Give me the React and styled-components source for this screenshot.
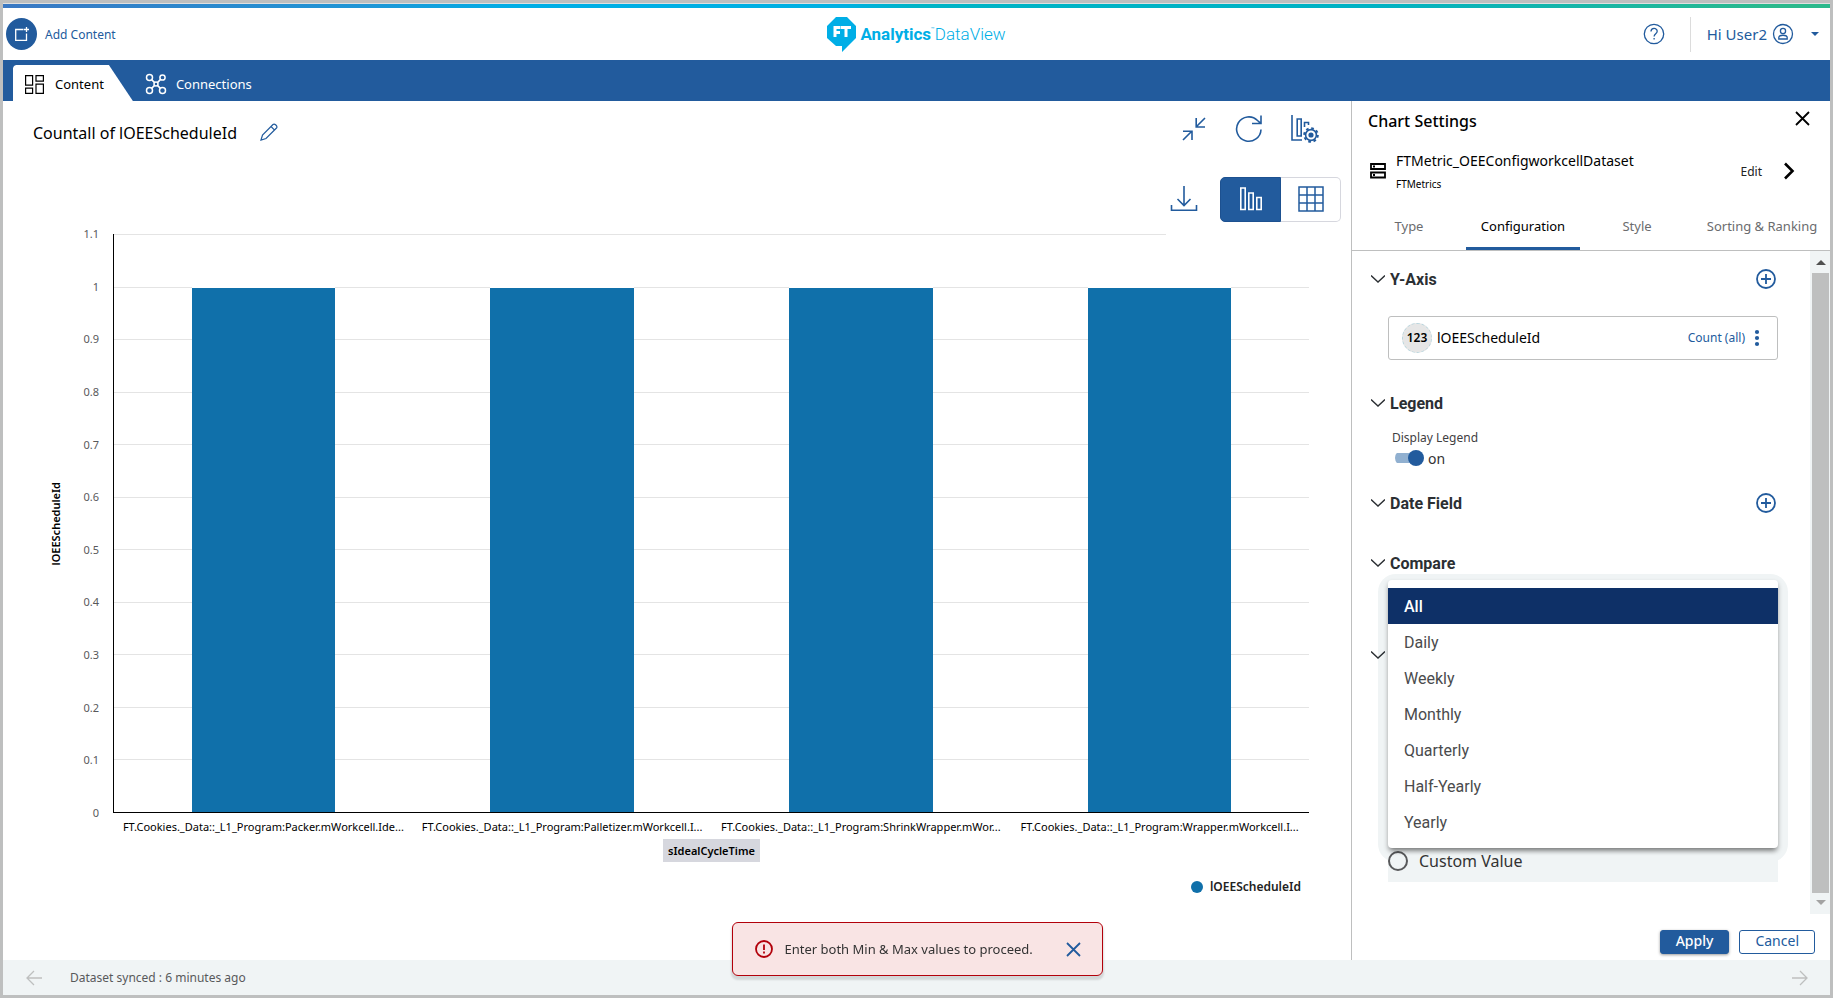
import React, { useState } from 'react';
import styled, { createGlobalStyle } from 'styled-components';

const GlobalStyle = createGlobalStyle`
  * {
    box-sizing: border-box;
  }

  body {
    margin: 0;
    font-family: "Noto Sans", sans-serif;
    font-size: 14px;
    color: #000000;
    background-color: #ffffff;
  }

  button {
    font-family: inherit;
    background: none;
    border: none;
    padding: 0;
    cursor: pointer;
  }

  svg {
    display: block;
    flex-shrink: 0;
  }
`;

const Page = styled.div`
  display: flex;
  flex-direction: column;
  height: 100vh;
  border: 3px solid #bebfbf;
`;

const TopLine = styled.div`
  height: 5px;
  border-top: 1px solid #e0e0e0;
  background: linear-gradient(90deg, #3a78c3 0%, #1f96d6 20%, #00aee6 28%, #00b0e2 46%, #00b4c6 50%, #00b2c4 75%, #2bb98c 97%);
`;

const Header = styled.header`
  display: grid;
  grid-template-columns: 1fr auto 1fr;
  align-items: center;
  height: 52px;
  padding: 0 3px;
`;

const AddButton = styled.button`
  display: flex;
  align-items: center;
  gap: 8px;
  justify-self: start;
  font-size: 12px;
  color: #225b9d;
`;

const AddIcon = styled.span`
  display: flex;
  align-items: center;
  justify-content: center;
  width: 31px;
  height: 32px;
  border-radius: 50%;
  background-color: #225b9d;
`;

const Brand = styled.div`
  display: flex;
  align-items: center;
  gap: 4px;
  font-family: Roboto, sans-serif;
  font-size: 17px;
  line-height: 20px;
  color: #00aee6;
`;

const BrandName = styled.div`
  display: flex;
  align-items: flex-start;
`;

const BrandStrong = styled.span`
  font-weight: 700;
`;

const BrandMark = styled.span`
  font-size: 6px;
  line-height: 10px;
`;

const BrandLight = styled.span`
  font-weight: 300;
`;

const UserArea = styled.div`
  display: flex;
  align-items: center;
  justify-self: end;
  margin-right: 8px;
`;

const IconButton = styled.button`
  display: flex;
  align-items: center;
  justify-content: center;
  color: ${(props) => props.$color || "#225b9d"};
`;

const UserButton = styled.button`
  display: flex;
  align-items: center;
  gap: 5px;
  height: 35px;
  margin-left: 25px;
  padding-left: 16px;
  border-left: 1px solid #dcdcdc;
  font-size: 15px;
  color: #225b9d;
`;

const Caret = styled.span`
  margin-left: 12px;
  border: 4px solid transparent;
  border-top-color: #225b9d;
  border-bottom: none;
`;

const Nav = styled.nav`
  display: flex;
  align-items: flex-end;
  height: 41px;
  padding-left: 10px;
  background-color: #225b9d;
`;

const NavTab = styled.a`
  display: flex;
  align-items: center;
  gap: ${(props) => (props.$active ? "11px" : "9px")};
  height: 36px;
  font-size: 13px;
  text-decoration: none;
  color: ${(props) => (props.$active ? "#000000" : "#ffffff")};
  background-color: ${(props) => (props.$active ? "#ffffff" : "transparent")};
  padding: ${(props) => (props.$active ? "2px 29px 0 12px" : "2px 0 0 12px")};
  clip-path: ${(props) => (props.$active ? "polygon(0 3px, 1px 1px, 3px 0, calc(100% - 24px) 0, 100% 100%, 0 100%)" : "none")};
`;

const Body = styled.div`
  display: flex;
  flex: 1;
  min-height: 0;
`;

const Main = styled.main`
  display: flex;
  flex-direction: column;
  flex: 1;
  min-width: 0;
`;

const TitleRow = styled.div`
  display: flex;
  align-items: center;
  justify-content: space-between;
  height: 56px;
  padding: 0 32px 0 30px;
`;

const Title = styled.h1`
  display: flex;
  align-items: center;
  gap: 22px;
  margin: 8px 0 0;
  font-size: 16px;
  font-weight: 400;
`;

const Actions = styled.div`
  display: flex;
  align-items: center;
  gap: 28px;
`;

const ViewRow = styled.div`
  display: flex;
  align-items: center;
  justify-content: flex-end;
  gap: 22px;
  height: 84px;
  padding-right: 10px;
`;

const Segmented = styled.div`
  display: flex;
`;

const Segment = styled.button`
  display: flex;
  align-items: center;
  justify-content: center;
  width: ${(props) => (props.$active ? "61px" : "60px")};
  height: 45px;
  border: 1px solid ${(props) => (props.$active ? "#1d5190" : "#d6d7de")};
  border-left-width: ${(props) => (props.$active ? "1px" : "0")};
  border-radius: ${(props) => (props.$active ? "5px 0 0 5px" : "0 5px 5px 0")};
  color: ${(props) => (props.$active ? "#ffffff" : "#225b9d")};
  background-color: ${(props) => (props.$active ? "#225b9d" : "#ffffff")};
`;

const Chart = styled.section`
  display: grid;
  grid-template-columns: 60px 36px minmax(0, 1fr);
  grid-template-rows: minmax(0, 1fr) auto;
  flex: 1;
  min-height: 0;
  padding: 0 42px 0 0;
  margin-top: -7px;
`;

const YTitle = styled.div`
  align-self: center;
  justify-self: end;
  writing-mode: vertical-rl;
  transform: rotate(180deg);
  font-size: 11px;
  font-weight: 600;
  line-height: 14px;
`;

const YLabels = styled.div`
  display: flex;
  flex-direction: column;
  justify-content: space-between;
  margin: -8px 0;
  font-size: 11px;
  line-height: 16px;
  text-align: right;
  color: #58595b;
`;

const Plot = styled.div`
  position: relative;
  display: grid;
  grid-template-columns: repeat(4, 1fr);
  align-items: end;
  justify-items: center;
  margin-left: 14px;
  border-left: 1px solid #000000;
  border-bottom: 1px solid #000000;
`;

const GridLines = styled.div`
  position: absolute;
  inset: 0;
  display: flex;
  flex-direction: column;
`;

const GridLine = styled.div`
  flex: 1;
  border-top: 1px solid #e4e4e4;

  &:first-child {
    margin-right: 143px;
  }
`;

const Bar = styled.div`
  position: relative;
  width: 48%;
  border-top: 1px solid #ffffff;
  background-color: #1070aa;
`;

const XAxis = styled.div`
  grid-column: 3;
  margin-left: 15px;
`;

const XLabels = styled.div`
  display: grid;
  grid-template-columns: repeat(4, 1fr);
  margin-top: 6px;
  font-size: 11px;
  line-height: 16px;
  text-align: center;
  white-space: nowrap;
`;

const XTitle = styled.div`
  width: max-content;
  margin: 4px auto 0;
  padding: 0 5px;
  font-size: 11px;
  font-weight: 600;
  line-height: 23px;
  background-color: #d6d7de;
`;

const Legend = styled.div`
  display: flex;
  align-items: center;
  justify-content: flex-end;
  gap: 7px;
  height: 98px;
  padding: 0 8px 49px 0;
  font-size: 12px;
  font-weight: 600;
  color: #222222;
`;

const LegendDot = styled.span`
  width: 12px;
  height: 12px;
  border-radius: 50%;
  background-color: #1070aa;
`;

const Panel = styled.aside`
  display: flex;
  flex-direction: column;
  width: 479px;
  flex-shrink: 0;
  border-left: 1px solid #bebfbf;
`;

const PanelHeader = styled.div`
  display: flex;
  align-items: flex-start;
  justify-content: space-between;
  height: 40px;
  padding: 10px 20px 0 16px;
`;

const PanelTitle = styled.h2`
  margin: 0;
  font-size: 16px;
  line-height: 20px;
  font-weight: 500;
`;

const Dataset = styled.div`
  display: flex;
  align-items: center;
  height: 62px;
  padding: 0 35px 2px 18px;
`;

const DatasetText = styled.div`
  flex: 1;
  margin-left: 10px;
`;

const DatasetName = styled.div`
  font-size: 14px;
  line-height: 22px;
`;

const DatasetSource = styled.div`
  font-size: 10px;
  line-height: 16px;
  margin-top: 4px;
`;

const EditButton = styled.button`
  font-size: 12px;
  color: #222222;
  margin-right: 21px;
`;

const PanelTabs = styled.div`
  display: grid;
  grid-template-columns: repeat(3, 114px) 1fr;
  height: 48px;
  overflow: hidden;
  border-bottom: 1px solid #bebfbf;
`;

const PanelTab = styled.button`
  height: 47px;
  padding-top: 2px;
  font-size: 13px;
  white-space: nowrap;
  color: ${(props) => (props.$active ? "#000000" : "#6b6c6e")};
  border-bottom: 3px solid ${(props) => (props.$active ? "#225b9d" : "transparent")};
`;

const ScrollArea = styled.div`
  display: flex;
  flex: 1;
  min-height: 0;
`;

const Sections = styled.div`
  flex: 1;
  min-width: 0;
  padding: 10px 32px 0 19px;
`;

const Section = styled.section`
  position: relative;
  height: ${(props) => props.$height};
`;

const SectionHeader = styled.div`
  position: relative;
  z-index: 1;
  display: flex;
  align-items: center;
  justify-content: space-between;
  height: 36px;
  padding-right: 2px;
`;

const SectionToggle = styled.button`
  display: flex;
  align-items: center;
  gap: 5px;
  font-family: Roboto, sans-serif;
  font-size: 16px;
  font-weight: 700;
  color: #2b2f33;
`;

const Field = styled.div`
  display: flex;
  align-items: center;
  height: 44px;
  margin: 19px 0 0 17px;
  padding: 0 17px 1px 13px;
  border: 1px solid #bebfbf;
  border-radius: 3px;
`;

const FieldType = styled.span`
  display: flex;
  align-items: center;
  justify-content: center;
  width: 30px;
  height: 30px;
  border: 1px dashed #b9d5dd;
  border-radius: 50%;
  font-size: 12px;
  font-weight: 600;
  background-color: #e6e6e6;
`;

const FieldName = styled.span`
  flex: 1;
  margin-left: 5px;
  font-size: 14px;
`;

const Aggregate = styled.span`
  margin-right: 9px;
  font-size: 12px;
  color: #225b9d;
`;

const LegendSetting = styled.div`
  margin-left: 21px;
  padding-top: 8px;
`;

const SettingLabel = styled.div`
  font-size: 12px;
  line-height: 18px;
  color: #3f4042;
`;

const Toggle = styled.label`
  display: flex;
  align-items: center;
  gap: 4px;
  height: 22px;
  padding-left: 3px;
  font-size: 14px;
  color: #333333;
`;

const ToggleInput = styled.input`
  appearance: none;
  display: flex;
  align-items: center;
  justify-content: flex-end;
  width: 29px;
  height: 16px;
  margin: 0;
  background: linear-gradient(#91b0d0, #91b0d0) 0 50% / 26px 10px no-repeat;
  border-radius: 8px;

  &::after {
    content: "";
    width: 16px;
    height: 16px;
    border-radius: 50%;
    background-color: #225b9d;
  }

  &:not(:checked) {
    justify-content: flex-start;
  }
`;

const MenuHalo = styled.div`
  position: absolute;
  top: 35px;
  left: 17px;
  right: 0;
  border-radius: 8px;
  box-shadow: 0 4px 0 10px #f0f4f5;
`;

const Menu = styled.ul`
  position: relative;
  z-index: 2;
  margin: 0;
  padding: 8px 0;
  list-style: none;
  border-radius: 4px;
  background-color: #ffffff;
  box-shadow: 0 5px 5px -3px rgba(0, 0, 0, 0.3), 0 3px 5px 0 rgba(0, 0, 0, 0.3);
`;

const MenuItem = styled.li`
  display: flex;
`;

const MenuOption = styled.button`
  flex: 1;
  height: 36px;
  padding: 0 16px;
  text-align: left;
  font-family: Roboto, sans-serif;
  font-size: 16px;
  font-weight: ${(props) => (props.$selected ? 500 : 400)};
  color: ${(props) => (props.$selected ? "#ffffff" : "#4a4b4d")};
  background-color: ${(props) => (props.$selected ? "#0e3067" : "#ffffff")};
`;

const RadioRow = styled.label`
  position: relative;
  z-index: 1;
  display: flex;
  align-items: center;
  gap: 11px;
  height: 42px;
  margin: 167px 0 0 17px;
  font-size: 16px;
  color: #333333;
  background-color: #f0f4f5;
`;

const Radio = styled.input`
  appearance: none;
  width: 20px;
  height: 20px;
  margin: 0;
  border: 2px solid #58595b;
  border-radius: 50%;
  background-color: #f0f4f5;

  &:checked {
    box-shadow: inset 0 0 0 4px #f0f4f5;
    background-color: #225b9d;
  }
`;

const ScrollBar = styled.div`
  display: flex;
  flex-direction: column;
  align-items: center;
  width: 20px;
  padding: 9px 1px 9px 2px;
  background-color: #f0f4f5;
`;

const ScrollArrow = styled.span`
  border: 5px solid transparent;
  ${(props) => (props.$up ? "border-top: none; border-bottom-color: #505050;" : "border-bottom: none; border-top-color: #a3a3a3;")}
`;

const ScrollThumb = styled.div`
  flex: 1;
  align-self: stretch;
  margin: 8px 0 7px;
  background-color: #bebfbf;
`;

const PanelFooter = styled.div`
  display: flex;
  align-items: center;
  justify-content: flex-end;
  gap: 10px;
  height: 46px;
  padding: 10px 15px 0 0;
`;

const Button = styled.button`
  height: 24px;
  padding: 0 15px 2px;
  border: 1px solid #225b9d;
  border-radius: 3px;
  font-size: 14px;
  line-height: 20px;
  font-weight: ${(props) => (props.$primary ? 500 : 400)};
  color: ${(props) => (props.$primary ? "#ffffff" : "#225b9d")};
  background-color: ${(props) => (props.$primary ? "#225b9d" : "#ffffff")};
  box-shadow: ${(props) => (props.$primary ? "0 1px 3px rgba(0, 0, 0, 0.4)" : "none")};
`;

const Footer = styled.footer`
  display: flex;
  align-items: center;
  height: 35px;
  padding: 0 22px 0 23px;
  background-color: #f0f4f5;
`;

const SyncText = styled.span`
  flex: 1;
  margin-left: 28px;
  font-size: 12px;
  color: #58595b;
`;

const Toast = styled.div`
  position: fixed;
  left: 50%;
  bottom: 22px;
  z-index: 5;
  display: flex;
  align-items: center;
  width: 371px;
  height: 54px;
  margin-left: -185px;
  padding: 0 21px 0 22px;
  border: 1px solid #b2000a;
  border-radius: 6px;
  background-color: #f9e4e4;
  box-shadow: 0 3px 2px 1px rgba(0, 0, 0, 0.12);
`;

const ToastText = styled.span`
  flex: 1;
  margin-left: 12px;
  font-size: 13px;
  color: #333333;
`;

const Icon = ({ size = 24, width, height, stroke = 1.5, children }) => (
  <svg
    width={width || size}
    height={height || size}
    viewBox={`0 0 ${width || size} ${height || size}`}
    fill="none"
    stroke="currentColor"
    strokeWidth={stroke}
    aria-hidden="true"
  >
    {children}
  </svg>
);

const PlusCircle = () => (
  <Icon size={20} stroke={1.8}>
    <circle cx="10" cy="10" r="9" />
    <path d="M10 5v10M5 10h10" />
  </Icon>
);

const Chevron = () => (
  <Icon width={14} height={8} stroke={1.4}>
    <path d="M0 0.5l7 6.5 7-6.5" />
  </Icon>
);

const Close = ({ size = 14, stroke = 2 }) => (
  <Icon size={size} stroke={stroke}>
    <path d={`M1 1L${size - 1} ${size - 1}M${size - 1} 1L1 ${size - 1}`} />
  </Icon>
);

const ticks = ['1.1', '1', '0.9', '0.8', '0.7', '0.6', '0.5', '0.4', '0.3', '0.2', '0.1', '0'];
const axisMax = 1.1;

const bars = [
  { label: 'FT.Cookies._Data::_L1_Program:Packer.mWorkcell.Ide...', value: 1 },
  { label: 'FT.Cookies._Data::_L1_Program:Palletizer.mWorkcell.I...', value: 1 },
  { label: 'FT.Cookies._Data::_L1_Program:ShrinkWrapper.mWor...', value: 1 },
  { label: 'FT.Cookies._Data::_L1_Program:Wrapper.mWorkcell.I...', value: 1 },
];

const periods = ['All', 'Daily', 'Weekly', 'Monthly', 'Quarterly', 'Half-Yearly', 'Yearly'];
const tabs = ['Type', 'Configuration', 'Style', 'Sorting & Ranking'];

const AppHeader = () => (
  <Header>
    <AddButton>
      <AddIcon>
        <svg width="14" height="14" viewBox="0 0 14 14" fill="none" stroke="#fff" strokeWidth="1.3">
          <path d="M8 2.5H0.7v10.8h10.8V6.5M11.5 0v5M8.5 2.5H14" />
        </svg>
      </AddIcon>
      Add Content
    </AddButton>
    <Brand>
      <svg width="29" height="35" viewBox="0 0 29 35">
        <path fill="#00aee6" d="M9 0h11l9 9v12l-8 8-6 6v-6H9l-9-8V9z" />
        <path fill="none" stroke="#fff" strokeWidth="3" d="M8 20v-9.500h5.500M8 15.500h5M14 10.500h10M19 10.500V20" />
      </svg>
      <BrandName>
        <BrandStrong>Analytics</BrandStrong>
        <BrandMark>™</BrandMark>
        <BrandLight>DataView</BrandLight>
      </BrandName>
    </Brand>
    <UserArea>
      <IconButton aria-label="Help">
        <Icon size={22} stroke={1.3}>
          <circle cx="11" cy="11" r="9.7" />
          <path d="M8 8.600c0-4.200 6.200-4 6.200-.4 0 2.600-3 2.500-3.100 5.300M11.100 15v1.500" />
        </Icon>
      </IconButton>
      <UserButton>
        Hi User2
        <Icon size={22} stroke={1.3}>
          <circle cx="11" cy="11" r="9.500" />
          <circle cx="11" cy="8" r="2.600" />
          <path d="M6.800 16v-1.500c0-3 8.400-3 8.400 0V16z" />
        </Icon>
        <Caret />
      </UserButton>
    </UserArea>
  </Header>
);

const NavBar = () => (
  <Nav>
    <NavTab href="#content" $active>
      <Icon width={19} height={19} stroke={1.2}>
        <path d="M0.600 0.600h7v9.500h-7zM11 0.600h7.400v5.600H11zM0.600 13.200h7v5.200h-7zM11 9.200h7.400v9.200H11z" />
      </Icon>
      Content
    </NavTab>
    <NavTab href="#connections">
      <Icon size={22} stroke={1.5}>
        <circle cx="4.500" cy="4.500" r="3" />
        <circle cx="17.500" cy="4.500" r="2.600" />
        <circle cx="4.500" cy="17.500" r="3" />
        <circle cx="17.500" cy="17.500" r="3" />
        <circle cx="11" cy="11" r="2" />
        <path d="M6.600 6.600l3 3M15.600 6.400l-3.200 3.200M6.600 15.400l3-3M15.400 15.400l-3-3" />
      </Icon>
      Connections
    </NavTab>
  </Nav>
);

const ChartArea = () => (
  <Main>
    <TitleRow>
      <Title>
        Countall of lOEEScheduleId
        <IconButton aria-label="Rename">
          <Icon size={20} stroke={1.2}>
            <path d="M2 17l1.500-5L14 1.500c1.500-1.500 5 1.800 3.500 3.500L7 15.500zM12 3.500l3.600 3.600" />
          </Icon>
        </IconButton>
      </Title>
      <Actions>
        <IconButton aria-label="Collapse">
          <Icon size={26} stroke={1.6}>
            <path d="M24 2l-8.500 8.500M15.200 2v9H24M2 24l8.500-8.500M2 15.200h9V24" />
          </Icon>
        </IconButton>
        <IconButton aria-label="Refresh">
          <Icon size={28} stroke={1.6}>
            <path d="M26 14.500A12.200 12.200 0 1 1 22.500 5.500L25.500 8.200M26 0.500v8h-9" />
          </Icon>
        </IconButton>
        <IconButton aria-label="Chart settings">
          <Icon size={28} stroke={1.6}>
            <path d="M1 0v25h10M6.200 4h4v17h-4zM13.500 12V7.500h4V10" />
            <circle cx="20" cy="20" r="5.400" />
            <circle cx="20" cy="20" r="1.800" fill="currentColor" />
            <circle cx="20" cy="20" r="6.800" strokeDasharray="2.670 2.670" strokeWidth="2" />
          </Icon>
        </IconButton>
      </Actions>
    </TitleRow>
    <ViewRow>
      <IconButton aria-label="Download">
        <Icon size={28} stroke={1.6}>
          <path d="M14 1v19M7.500 14l6.500 6.500 6.500-6.500M1.500 20v5.200h25V20" />
        </Icon>
      </IconButton>
      <Segmented>
        <Segment $active aria-label="Chart view">
          <Icon width={24} height={24} stroke={1.6}>
            <path d="M1.800 1h4.400v21.500H1.800zM9.800 6h4.400v16.500H9.800zM17.800 10.500h4.400v12h-4.400z" />
          </Icon>
        </Segment>
        <Segment aria-label="Table view">
          <Icon size={26} stroke={1.5}>
            <path d="M1 1h24v24H1zM9 1v24M17 1v24M1 9h24M1 17h24" />
          </Icon>
        </Segment>
      </Segmented>
    </ViewRow>
    <Chart>
      <YTitle>lOEEScheduleId</YTitle>
      <YLabels>
        {ticks.map((tick) => (
          <span key={tick}>{tick}</span>
        ))}
      </YLabels>
      <Plot>
        <GridLines>
          {ticks.slice(1).map((tick) => (
            <GridLine key={tick} />
          ))}
        </GridLines>
        {bars.map((bar) => (
          <Bar key={bar.label} style={{ height: `${(bar.value / axisMax) * 100}%` }} />
        ))}
      </Plot>
      <XAxis>
        <XLabels>
          {bars.map((bar) => (
            <span key={bar.label}>{bar.label}</span>
          ))}
        </XLabels>
        <XTitle>sIdealCycleTime</XTitle>
        <Legend>
          <LegendDot />
          lOEEScheduleId
        </Legend>
      </XAxis>
    </Chart>
  </Main>
);

const PanelSection = ({ title, height, canAdd, children }) => (
  <Section $height={height}>
    <SectionHeader>
      <SectionToggle aria-label={title || 'Target'}>
        <Chevron />
        {title}
      </SectionToggle>
      {canAdd && (
        <IconButton aria-label={`Add ${title}`}>
          <PlusCircle />
        </IconButton>
      )}
    </SectionHeader>
    {children}
  </Section>
);

const SettingsPanel = () => {
  const [period, setPeriod] = useState('All');
  const [legendOn, setLegendOn] = useState(true);

  return (
    <Panel>
      <PanelHeader>
        <PanelTitle>Chart Settings</PanelTitle>
        <IconButton $color="#000000" aria-label="Close">
          <Close size={15} stroke={1.8} />
        </IconButton>
      </PanelHeader>
      <Dataset>
        <Icon width={16} height={16} stroke={1.8}>
          <path d="M1 1h14v5H1zM1 9.500h14v5H1z" />
          <path d="M3 3.500h2M3 12h2" />
        </Icon>
        <DatasetText>
          <DatasetName>FTMetric_OEEConfigworkcellDataset</DatasetName>
          <DatasetSource>FTMetrics</DatasetSource>
        </DatasetText>
        <EditButton>Edit</EditButton>
        <IconButton $color="#000000" aria-label="Open dataset">
          <Icon width={12} height={18} stroke={2.6}>
            <path d="M2 1.500l7.500 7.500L2 16.500" />
          </Icon>
        </IconButton>
      </Dataset>
      <PanelTabs role="tablist">
        {tabs.map((tab) => (
          <PanelTab key={tab} role="tab" $active={tab === 'Configuration'}>
            {tab}
          </PanelTab>
        ))}
      </PanelTabs>
      <ScrollArea>
        <Sections>
          <PanelSection title="Y-Axis" height="124px" canAdd>
            <Field>
              <FieldType>123</FieldType>
              <FieldName>lOEEScheduleId</FieldName>
              <Aggregate>Count (all)</Aggregate>
              <IconButton aria-label="Field options">
                <svg width="6" height="18" viewBox="0 0 6 18" fill="currentColor">
                  <circle cx="3" cy="3" r="2.100" />
                  <circle cx="3" cy="9" r="2.100" />
                  <circle cx="3" cy="15" r="2.100" />
                </svg>
              </IconButton>
            </Field>
          </PanelSection>
          <PanelSection title="Legend" height="100px">
            <LegendSetting>
              <SettingLabel>Display Legend</SettingLabel>
              <Toggle>
                <ToggleInput type="checkbox" checked={legendOn} onChange={() => setLegendOn(!legendOn)} />
                {legendOn ? 'on' : 'off'}
              </Toggle>
            </LegendSetting>
          </PanelSection>
          <PanelSection title="Date Field" height="60px" canAdd />
          <PanelSection title="Compare" height="92px">
            <MenuHalo>
              <Menu>
                {periods.map((item) => (
                  <MenuItem key={item}>
                    <MenuOption $selected={item === period} onClick={() => setPeriod(item)}>
                      {item}
                    </MenuOption>
                  </MenuItem>
                ))}
              </Menu>
            </MenuHalo>
          </PanelSection>
          <PanelSection height="240px">
            <RadioRow>
              <Radio type="radio" name="target" />
              Custom Value
            </RadioRow>
          </PanelSection>
        </Sections>
        <ScrollBar>
          <ScrollArrow $up />
          <ScrollThumb />
          <ScrollArrow />
        </ScrollBar>
      </ScrollArea>
      <PanelFooter>
        <Button $primary>Apply</Button>
        <Button>Cancel</Button>
      </PanelFooter>
    </Panel>
  );
};

const ErrorToast = () => (
  <Toast role="alert">
    <IconButton as="span" $color="#b2000a">
      <Icon size={18} stroke={1.8}>
        <circle cx="9" cy="9" r="8" />
        <path d="M9 4.500v5.500M9 11.500v2" />
      </Icon>
    </IconButton>
    <ToastText>Enter both Min &amp; Max values to proceed.</ToastText>
    <IconButton aria-label="Dismiss">
      <Close size={15} stroke={1.8} />
    </IconButton>
  </Toast>
);

const App = () => {
  return (
    <>
      <GlobalStyle />
      <Page>
        <TopLine />
        <AppHeader />
        <NavBar />
        <Body>
          <ChartArea />
          <SettingsPanel />
        </Body>
        <Footer>
          <IconButton $color="#bebfbf" aria-label="Previous">
            <Icon size={16} stroke={1.3}>
              <path d="M16 8H1M8 1L1 8l7 7" />
            </Icon>
          </IconButton>
          <SyncText>Dataset synced : 6 minutes ago</SyncText>
          <IconButton $color="#bebfbf" aria-label="Next">
            <Icon size={16} stroke={1.3}>
              <path d="M0 8h15M8 1l7 7-7 7" />
            </Icon>
          </IconButton>
        </Footer>
      </Page>
      <ErrorToast />
    </>
  );
};

export default App;
